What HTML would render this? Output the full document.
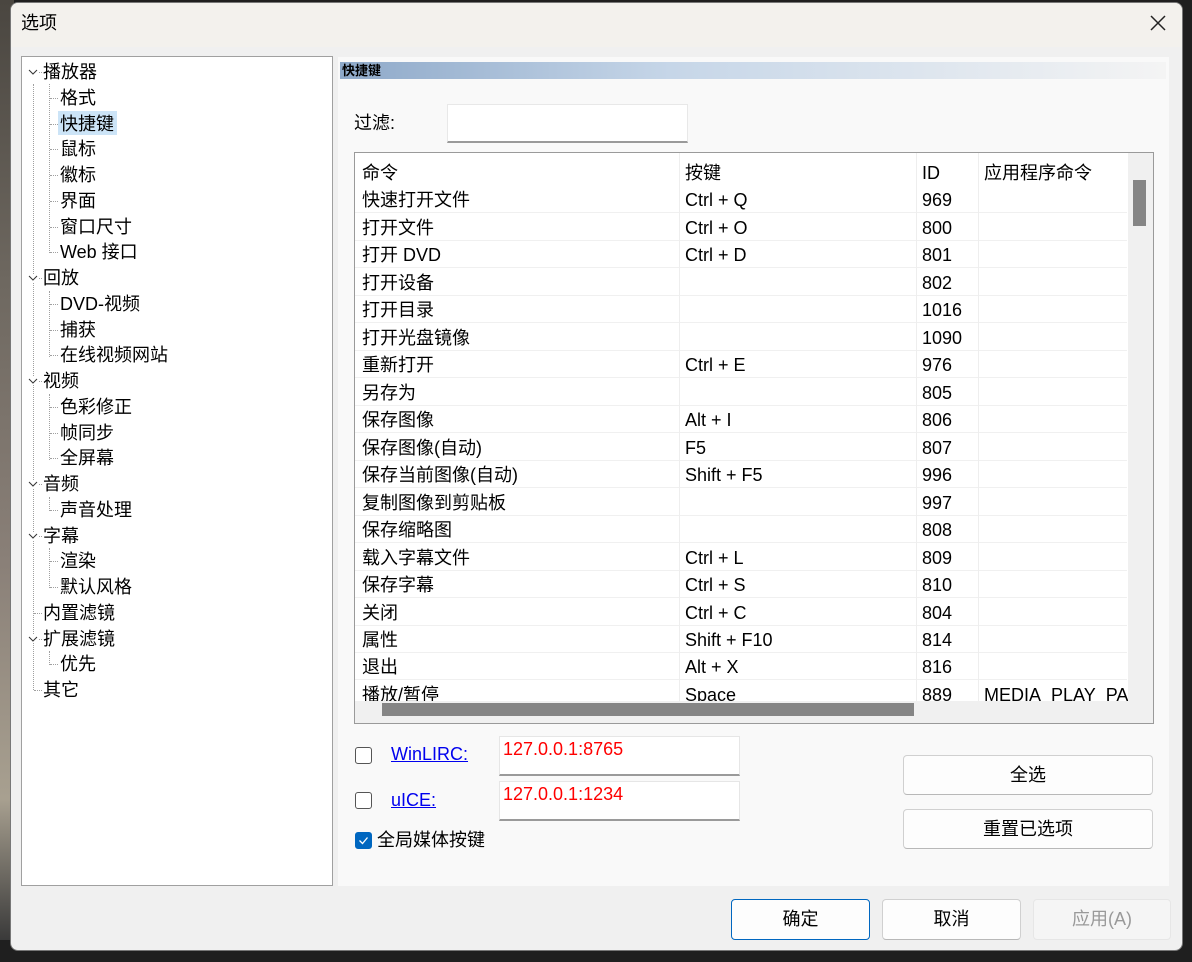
<!DOCTYPE html>
<html><head><meta charset="utf-8"><style>
*{box-sizing:border-box;margin:0;padding:0}
body{width:1192px;height:962px;overflow:hidden;position:relative;background:#1f1f1f;font-family:"Liberation Sans","Microsoft YaHei","Noto Sans CJK SC",sans-serif;color:#000}
.a{position:absolute;white-space:nowrap}
#bgl{left:0;top:0;width:14px;height:940px;background:linear-gradient(#4a4640,#6e6860 30%,#8a8078 60%,#a8a090 85%,#3a3a3a)}
#win{left:10px;top:2px;width:1173px;height:949px;background:#f0f0f0;border-radius:8px;border:1px solid #777;overflow:hidden}
#title{left:0;top:0;width:100%;height:44px;background:#f3f1ed}
.t18{font-size:18px;line-height:20px}
.tree{left:21px;top:56px;width:312px;height:830px;background:#fff;border:1px solid #a0a0a0}
.dv{position:absolute;border-left:1px dotted #a0a0a0}
.dh{position:absolute;border-top:1px dotted #a0a0a0;width:8px}
.panel{left:338px;top:57px;width:831px;height:829px;background:#f9f9f9}
.hdr{left:340px;top:62px;width:826px;height:17px;background:linear-gradient(90deg,#8ea9c9,#c6d6e8 40%,#f4f4f4)}
.tbl{left:354px;top:152px;width:800px;height:572px;background:#fff;border:1px solid #9a9a9a;overflow:hidden}
.row{position:absolute;left:0;width:772px;height:27px;border-bottom:1px solid #f0f0f0}
.row span{position:absolute;top:4px;font-size:18px;line-height:20px}
.btn{position:absolute;background:#fdfdfd;border:1px solid #d0d0d0;border-bottom-color:#b8b8b8;border-radius:4px;font-size:18px;text-align:center}
.cb{position:absolute;width:17px;height:17px;border:1px solid #555;border-radius:3px;background:#fff}
.inp{position:absolute;background:#fff;border:1px solid #e6e6e6;border-bottom:2px solid #9a9a9a;color:#f00;font-size:18px;padding:2px 3px}
a{color:#0000ee;text-decoration:underline}
</style></head><body>
<div class="a" id="bgl"></div>
<div class="a" id="win">
 <div class="a" id="title"></div>
 <div class="a t18" style="left:10px;top:10px">选项</div>
 <svg class="a" style="left:1139px;top:12px" width="16" height="16"><path d="M1 1L15 15M15 1L1 15" stroke="#222" stroke-width="1.5"/></svg>
</div>
<div class="a tree"></div>
<div class="a" style="left:58px;top:111px;width:59px;height:24px;background:#cce4f7"></div>
<!-- tree lines -->
<div class="dv" style="left:33px;top:84px;height:606px"></div>
<div class="dv" style="left:49px;top:84px;height:169px"></div>
<div class="dv" style="left:49px;top:291px;height:66px"></div>
<div class="dv" style="left:49px;top:394px;height:66px"></div>
<div class="dv" style="left:49px;top:497px;height:14px"></div>
<div class="dv" style="left:49px;top:548px;height:40px"></div>
<div class="dv" style="left:49px;top:651px;height:14px"></div>
<div id="tree"></div>
<div class="a panel"></div>
<div class="a hdr"></div>
<div class="a" style="left:342px;top:62px;font-size:13px;font-weight:bold;line-height:17px">快捷键</div>
<div class="a t18" style="left:354px;top:113px">过滤:</div>
<div class="a" style="left:447px;top:104px;width:241px;height:39px;background:#fff;border:1px solid #e8e8e8;border-bottom:2px solid #9a9a9a"></div>
<div class="a tbl" id="tbl">
 <div style="position:absolute;left:324px;top:0;width:1px;height:548px;background:#eee"></div>
 <div style="position:absolute;left:561px;top:0;width:1px;height:548px;background:#eee"></div>
 <div style="position:absolute;left:623px;top:0;width:1px;height:548px;background:#eee"></div>
 <div style="position:absolute;left:773px;top:0;width:25px;height:548px;background:#f0f0f0"></div>
 <div style="position:absolute;left:778px;top:27px;width:13px;height:46px;background:#858585"></div>
 <div style="position:absolute;left:0;top:548px;width:798px;height:22px;background:#f0f0f0"></div>
 <div style="position:absolute;left:27px;top:550px;width:532px;height:13px;background:#858585"></div>
</div>
<div class="cb" style="left:355px;top:747px"></div>
<div class="a t18" style="left:391px;top:744px"><a>WinLIRC:</a></div>
<div class="inp" style="left:499px;top:736px;width:241px;height:40px">127.0.0.1:8765</div>
<div class="cb" style="left:355px;top:792px"></div>
<div class="a t18" style="left:391px;top:790px"><a>uICE:</a></div>
<div class="inp" style="left:499px;top:781px;width:241px;height:40px">127.0.0.1:1234</div>
<div class="cb" style="left:355px;top:832px;background:#0067c0;border-color:#0067c0"><svg width="15" height="15" style="position:absolute;left:0;top:0"><path d="M3.5 7.5l3 3 5-6" stroke="#fff" stroke-width="1.3" fill="none"/></svg></div>
<div class="a t18" style="left:377px;top:830px">全局媒体按键</div>
<div class="btn" style="left:903px;top:755px;width:250px;height:40px;line-height:38px">全选</div>
<div class="btn" style="left:903px;top:809px;width:250px;height:40px;line-height:38px">重置已选项</div>
<div class="btn" style="left:731px;top:899px;width:139px;height:41px;line-height:39px;border:1px solid #0067c0">确定</div>
<div class="btn" style="left:882px;top:899px;width:139px;height:41px;line-height:39px">取消</div>
<div class="btn" style="left:1033px;top:899px;width:138px;height:41px;line-height:39px;color:#999;background:#f5f5f5;border-color:#e6e6e6">应用(A)</div>
<script>
var t=[[0,"播放器",1],[1,"格式"],[1,"快捷键"],[1,"鼠标"],[1,"徽标"],[1,"界面"],[1,"窗口尺寸"],[1,"Web 接口"],[0,"回放",1],[1,"DVD-视频"],[1,"捕获"],[1,"在线视频网站"],[0,"视频",1],[1,"色彩修正"],[1,"帧同步"],[1,"全屏幕"],[0,"音频",1],[1,"声音处理"],[0,"字幕",1],[1,"渲染"],[1,"默认风格"],[0,"内置滤镜"],[0,"扩展滤镜",1],[1,"优先"],[0,"其它"]],h="";
t.forEach(function(e,i){var y=62+i*25.75;
 if(e[0]){h+='<div class="dh" style="left:50px;top:'+(y+10)+'px"></div><div class="a t18" style="left:60px;top:'+y+'px">'+e[1]+'</div>'}
 else{h+='<div class="dh" style="left:34px;top:'+(y+10)+'px"></div>'+(e[2]?'<svg class="a" style="left:27px;top:'+(y+6)+'px;background:#fff" width="12" height="8"><path d="M2 2l4 4 4-4" stroke="#333" fill="none"/></svg>':'')+'<div class="a t18" style="left:43px;top:'+y+'px">'+e[1]+'</div>'}});
document.getElementById('tree').innerHTML=h;
var r=[["命令","按键","ID","应用程序命令"],["快速打开文件","Ctrl + Q","969",""],["打开文件","Ctrl + O","800",""],["打开 DVD","Ctrl + D","801",""],["打开设备","","802",""],["打开目录","","1016",""],["打开光盘镜像","","1090",""],["重新打开","Ctrl + E","976",""],["另存为","","805",""],["保存图像","Alt + I","806",""],["保存图像(自动)","F5","807",""],["保存当前图像(自动)","Shift + F5","996",""],["复制图像到剪贴板","","997",""],["保存缩略图","","808",""],["载入字幕文件","Ctrl + L","809",""],["保存字幕","Ctrl + S","810",""],["关闭","Ctrl + C","804",""],["属性","Shift + F10","814",""],["退出","Alt + X","816",""],["播放/暂停","Space","889","MEDIA_PLAY_PA"]],s="";
r.forEach(function(e,i){var y=6+i*27.47;s+='<div class="row" style="top:'+y+'px;'+(i==0?'border:none':'')+'"><span style="left:7px">'+e[0]+'</span><span style="left:330px">'+e[1]+'</span><span style="left:567px">'+e[2]+'</span><span style="left:629px">'+e[3]+'</span></div>'});
var tb=document.getElementById('tbl');tb.insertAdjacentHTML('afterbegin',s);
</script>
</body></html>
